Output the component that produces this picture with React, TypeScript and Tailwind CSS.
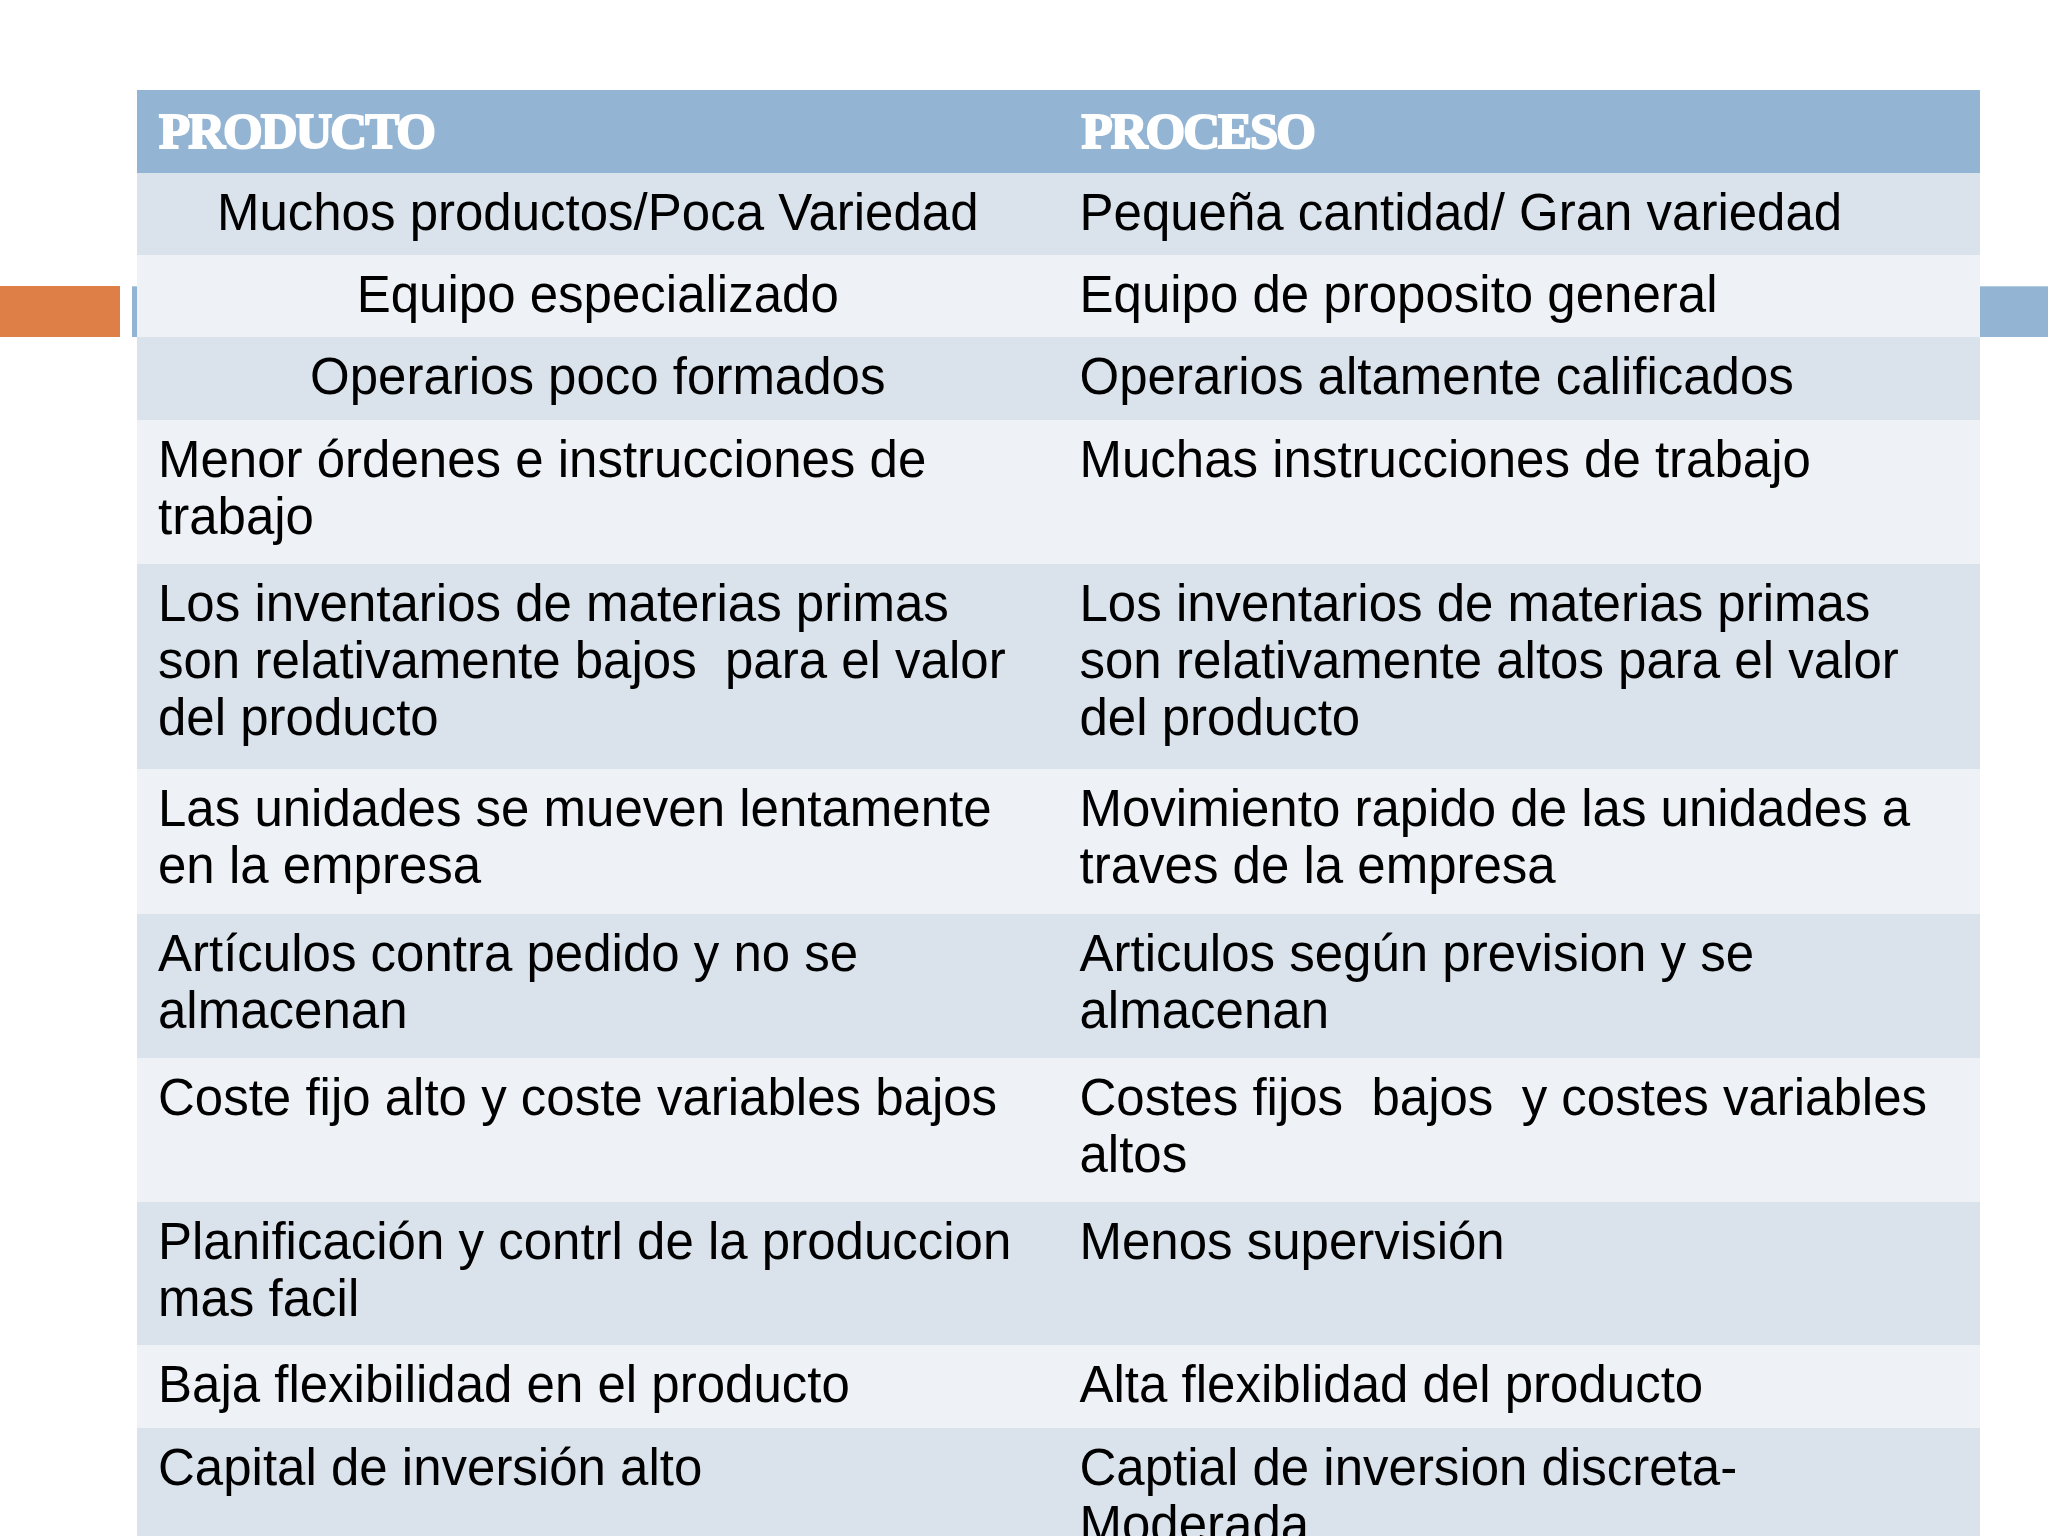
const rows: { a: string; b: string; h: string; center?: boolean }[] = [
  { a: "Muchos productos/Poca Variedad", b: "Pequeña cantidad/ Gran variedad", h: "h-[82px]", center: true },
  { a: "Equipo especializado", b: "Equipo de proposito general", h: "h-[82px]", center: true },
  { a: "Operarios poco formados", b: "Operarios altamente calificados", h: "h-[83px]", center: true },
  { a: "Menor órdenes e instrucciones de trabajo", b: "Muchas instrucciones de trabajo", h: "h-[144px]" },
  {
    a: "Los inventarios de materias primas son relativamente bajos  para el valor del producto",
    b: "Los inventarios de materias primas son relativamente altos para el valor del producto",
    h: "h-[205px]",
  },
  { a: "Las unidades se mueven lentamente en la empresa", b: "Movimiento rapido de las unidades a traves de la empresa", h: "h-[145px]" },
  { a: "Artículos contra pedido y no se almacenan", b: "Articulos según prevision y se almacenan", h: "h-[144px]" },
  { a: "Coste fijo alto y coste variables bajos", b: "Costes fijos  bajos  y costes variables altos", h: "h-[144px]" },
  { a: "Planificación y contrl de la produccion mas facil", b: "Menos supervisión", h: "h-[143px]" },
  { a: "Baja flexibilidad en el producto", b: "Alta flexiblidad del producto", h: "h-[83px]" },
  { a: "Capital de inversión alto", b: "Captial de inversion discreta-Moderada", h: "h-[144px]" },
];

const cellClass = "pl-[21px] pr-[21px] pt-[11px] text-[51px] leading-[57px] text-black whitespace-pre-wrap";
const headClass =
  "pt-[13px] text-[51px] leading-[57px] font-bold tracking-[-2px] text-white font-['Liberation_Serif',serif] [-webkit-text-stroke:2px_white]";

export default function App() {
  return (
    <div className="relative w-[2048px] h-[1536px] overflow-hidden bg-white font-['Liberation_Sans',Arial,sans-serif]">
      {/* decorative bars behind the table */}
      <div className="absolute left-0 top-[286px] w-[120px] h-[51px] bg-[#df7f48]" />
      <div className="absolute left-[132px] top-[286px] right-0 h-[51px] bg-[#93b5d3] border-t border-[#b4cce0]" />

      <div className="relative pt-[90px] pl-[137px]">
        <div className="w-[1843px]">
          <div className="grid grid-cols-2 h-[83px] bg-[#93b5d3]">
            <div className={`pl-[22px] ${headClass}`}>PRODUCTO</div>
            <div className={`pl-[23px] ${headClass}`}>PROCESO</div>
          </div>
          {rows.map((r, i) => (
            <div
              key={i}
              className={`grid grid-cols-2 ${r.h} ${i % 2 === 0 ? "bg-[#dae3ec]" : "bg-[#eef2f7]"}`}
            >
              <div className={`${cellClass} ${r.center ? "text-center" : ""}`}>{r.a}</div>
              <div className={cellClass}>{r.b}</div>
            </div>
          ))}
        </div>
      </div>
    </div>
  );
}
